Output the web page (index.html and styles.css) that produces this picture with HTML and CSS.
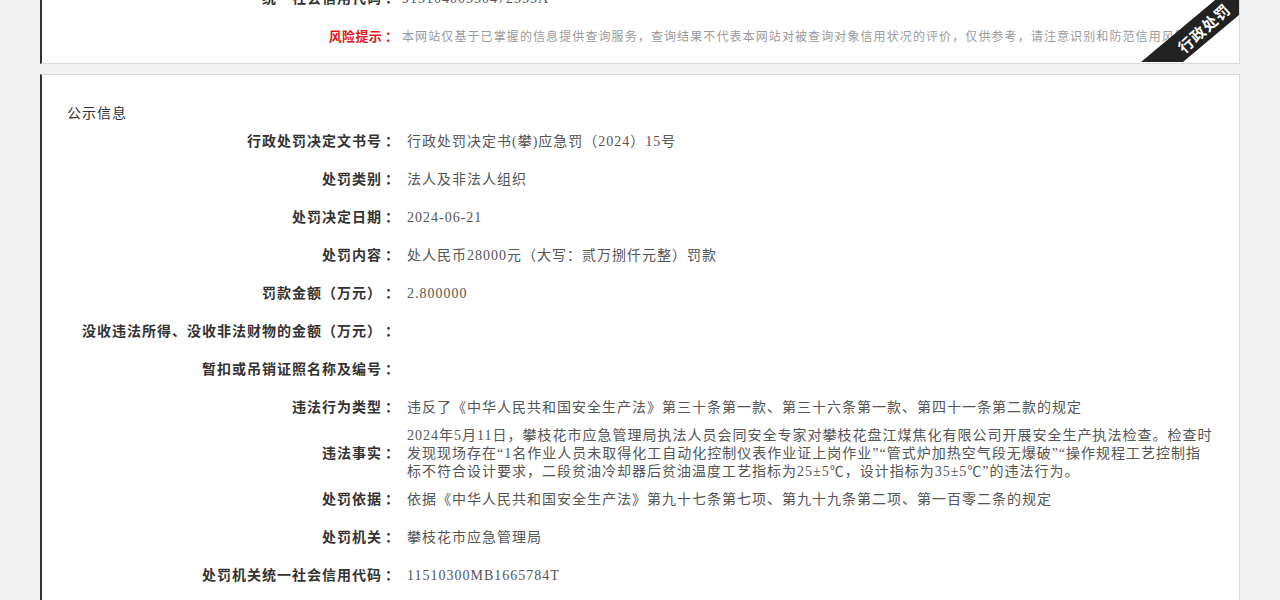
FILE: index.html
```html
<!DOCTYPE html>
<html lang="zh-CN">
<head>
<meta charset="utf-8">
<title>行政处罚</title>
<link rel="stylesheet" href="styles.css">
</head>
<body>
<div class="page">
  <section class="panel panel-top">
    <div class="rows rows-top">
      <div class="label">统一社会信用代码<span class="colon">：</span></div>
      <div class="value">91510400550472555A</div>
      <div class="label risk">风险提示<span class="colon">：</span></div>
      <div class="value notice">本网站仅基于已掌握的信息提供查询服务，查询结果不代表本网站对被查询对象信用状况的评价，仅供参考，请注意识别和防范信用风险。</div>
    </div>
    <div class="ribbon"><span>行政处罚</span></div>
  </section>

  <section class="panel panel-info">
    <h2 class="title">公示信息</h2>
    <div class="rows">
      <div class="label">行政处罚决定文书号<span class="colon">：</span></div>
      <div class="value">行政处罚决定书(攀)应急罚（2024）15号</div>

      <div class="label">处罚类别<span class="colon">：</span></div>
      <div class="value">法人及非法人组织</div>

      <div class="label">处罚决定日期<span class="colon">：</span></div>
      <div class="value">2024-06-21</div>

      <div class="label">处罚内容<span class="colon">：</span></div>
      <div class="value">处人民币28000元（大写：贰万捌仟元整）罚款</div>

      <div class="label">罚款金额（万元）<span class="colon">：</span></div>
      <div class="value">2.800000</div>

      <div class="label">没收违法所得、没收非法财物的金额（万元）<span class="colon">：</span></div>
      <div class="value"></div>

      <div class="label">暂扣或吊销证照名称及编号<span class="colon">：</span></div>
      <div class="value"></div>

      <div class="label">违法行为类型<span class="colon">：</span></div>
      <div class="value">违反了《中华人民共和国安全生产法》第三十条第一款、第三十六条第一款、第四十一条第二款的规定</div>

      <div class="label">违法事实<span class="colon">：</span></div>
      <div class="value">2024年5月11日，攀枝花市应急管理局执法人员会同安全专家对攀枝花盘江煤焦化有限公司开展安全生产执法检查。检查时发现现场存在“1名作业人员未取得化工自动化控制仪表作业证上岗作业”“管式炉加热空气段无爆破”“操作规程工艺控制指标不符合设计要求，二段贫油冷却器后贫油温度工艺指标为25±5℃，设计指标为35±5℃”的违法行为。</div>

      <div class="label">处罚依据<span class="colon">：</span></div>
      <div class="value">依据《中华人民共和国安全生产法》第九十七条第七项、第九十九条第二项、第一百零二条的规定</div>

      <div class="label">处罚机关<span class="colon">：</span></div>
      <div class="value">攀枝花市应急管理局</div>

      <div class="label">处罚机关统一社会信用代码<span class="colon">：</span></div>
      <div class="value">11510300MB1665784T</div>
    </div>
  </section>
</div>
</body>
</html>
```

FILE: styles.css
```css
body {
  margin: 0;
  background: #f2f2f2;
  font-family: "Liberation Serif", "Noto Sans CJK SC", serif;
  font-size: 14px;
  line-height: 18px;
  color: #333;
}

.page {
  width: 1200px;
  margin: -20px auto 0;
}

.panel {
  background: #fff;
  border: 1px solid #d9d9d9;
  border-left: 2px solid #333;
}

.panel-top {
  position: relative;
  overflow: hidden;
  border-top: none;
  padding: 0 24px 7px 25px;
}

.panel-info {
  margin-top: 10px;
  padding: 30px 24px 24px 25px;
}

.title {
  margin: 0;
  font-size: 14px;
  font-weight: normal;
  line-height: 18px;
  letter-spacing: 1px;
  color: #333;
}

.rows {
  display: grid;
  grid-template-columns: 330px 808px;
  column-gap: 10px;
}

.rows-top {
  grid-template-columns: 330px 790px;
  column-gap: 5px;
}

.label,
.value {
  min-height: 38px;
  display: flex;
  align-items: center;
  letter-spacing: 1px;
}

.label {
  justify-content: flex-end;
  text-align: right;
  font-weight: bold;
  color: #333;
}

.colon {
  display: inline-block;
  width: 12px;
  padding-left: 3px;
  letter-spacing: 0;
}

.value {
  color: #555;
}

.risk {
  color: #e3161c;
  font-size: 13px;
  letter-spacing: 0.3px;
}

.notice {
  font-size: 12px;
  letter-spacing: 1.1px;
  color: #9a9a9a;
  white-space: nowrap;
  overflow: hidden;
}

.ribbon {
  position: absolute;
  top: 0;
  right: 0;
  width: 98px;
  height: 82px;
  background: #222;
  clip-path: polygon(0 82px, 42px 82px, 98px 35px, 98px 0);
}

.ribbon span {
  position: absolute;
  left: 63px;
  top: 48px;
  transform: translate(-50%, -50%) rotate(-42deg);
  color: #fff;
  font-family: "Noto Sans CJK SC", sans-serif;
  font-size: 15px;
  font-weight: bold;
  letter-spacing: 1px;
  white-space: nowrap;
}
```
